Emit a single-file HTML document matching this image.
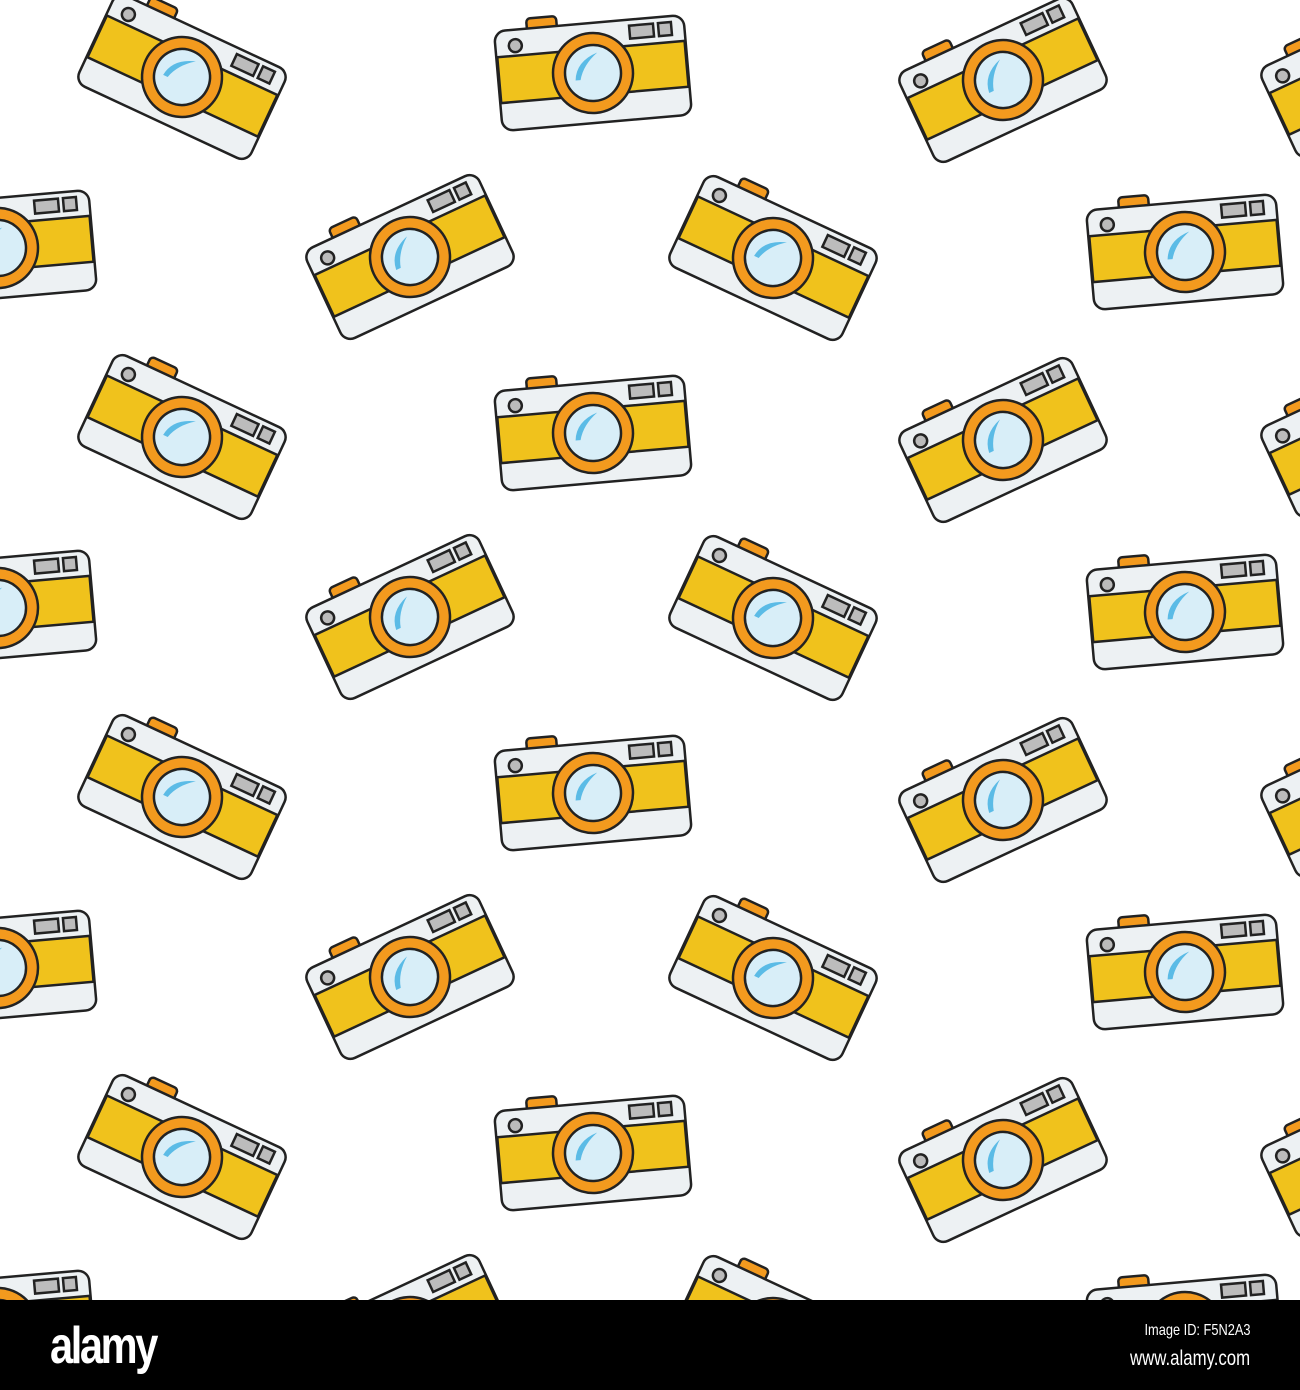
<!DOCTYPE html>
<html><head><meta charset="utf-8"><style>
html,body{margin:0;padding:0;background:#fff;}
body{width:1300px;height:1390px;overflow:hidden;position:relative;}
svg{position:absolute;left:0;top:0;}
.bar{position:absolute;left:0;top:1300px;width:1300px;height:90px;background:#000;color:#fff;font-family:"Liberation Sans",sans-serif;}
.logo{position:absolute;left:50px;top:16px;font-size:52px;font-weight:bold;letter-spacing:-3px;transform:scaleX(0.8);transform-origin:left top;}
.id{position:absolute;right:50px;top:22px;font-size:16px;transform:scaleX(0.8);transform-origin:right top;}
.www{position:absolute;right:50px;top:47px;font-size:21px;transform:scaleX(0.8);transform-origin:right top;}
</style></head><body>
<svg width="1300" height="1300" viewBox="0 0 1300 1300">
<defs>
<g id="cam" stroke="#222" stroke-width="2.5">
<rect x="-62" y="-60" width="30" height="14" rx="4" fill="#f39a1e"/>
<rect x="-95" y="-50" width="190" height="100" rx="11" fill="#edf1f3"/>
<rect x="-94" y="-24" width="188" height="46" fill="#f0c21c"/>
<circle cx="-75" cy="-34" r="6.5" fill="#bbb"/>
<rect x="40" y="-44" width="24" height="13" fill="#bcbcbc"/>
<rect x="69" y="-44" width="13" height="13" fill="#bcbcbc"/>
<circle cx="0" cy="0" r="40" fill="#f39a1e"/>
<circle cx="0" cy="0" r="28" fill="#d8eef8"/>
<path d="M-18 6 Q-16 -13 6 -20 Q-9 -9 -13 6 Z" fill="#5bbbe6" stroke="none"/>
</g>
</defs>
<g>
<g id="tile">
<use href="#cam" transform="translate(182,77) rotate(25)"/>
<use href="#cam" transform="translate(593,73) rotate(-5)"/>
<use href="#cam" transform="translate(1003,80) rotate(-25)"/>
<use href="#cam" transform="translate(1365,75) rotate(-25)"/>
<use href="#cam" transform="translate(-2,248) rotate(-5)"/>
<use href="#cam" transform="translate(410,257) rotate(-25)"/>
<use href="#cam" transform="translate(773,258) rotate(25)"/>
<use href="#cam" transform="translate(1185,252) rotate(-5)"/>
</g>
<use href="#tile" transform="translate(0,360)"/>
<use href="#tile" transform="translate(0,720)"/>
<use href="#tile" transform="translate(0,1080)"/>
<use href="#tile" transform="translate(0,-360)"/>
</g>
</svg>
<div class="bar">
<div class="logo">alamy</div>
<div class="id">Image ID: F5N2A3</div>
<div class="www">www.alamy.com</div>
</div>
</body></html>
